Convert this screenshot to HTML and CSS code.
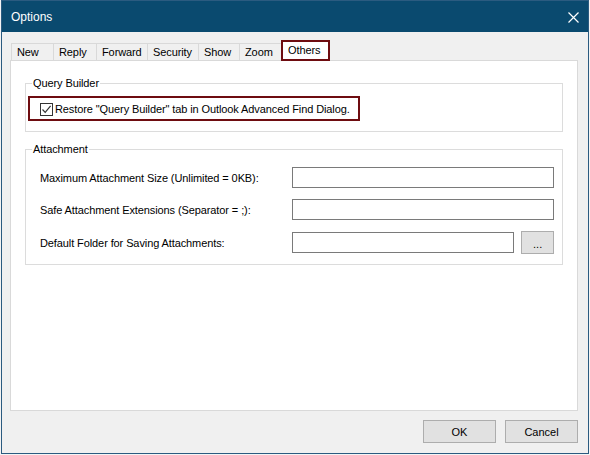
FILE: index.html
```html
<!DOCTYPE html>
<html lang="en">
<head>
<meta charset="utf-8">
<title>Options</title>
<link rel="stylesheet" href="styles.css">
</head>
<body>
<div class="window">
  <div class="titlebar">
    <span class="title">Options</span>
    <svg class="close" width="11" height="11" viewBox="0 0 11 11" aria-label="Close">
      <path d="M0.5 0.5 L10.5 10.5 M10.5 0.5 L0.5 10.5" stroke="#ffffff" stroke-width="1.2" fill="none"/>
    </svg>
  </div>
  <div class="content">
    <div class="tabs">
      <div class="tab w-new">New</div>
      <div class="tab w-reply">Reply</div>
      <div class="tab w-forward">Forward</div>
      <div class="tab w-security">Security</div>
      <div class="tab w-show">Show</div>
      <div class="tab w-zoom">Zoom</div>
      <div class="tab active">Others</div>
    </div>
    <div class="panel">
      <div class="group group-query">
        <div class="group-title">Query Builder</div>
        <label class="highlight">
          <span class="checkbox">
            <svg width="11" height="11" viewBox="0 0 11 11">
              <path d="M1.5 5.5 L4.2 8.3 L9.6 1.8" stroke="#333333" stroke-width="1.2" fill="none"/>
            </svg>
          </span>
          <span class="check-label">Restore "Query Builder" tab in Outlook Advanced Find Dialog.</span>
        </label>
      </div>
      <div class="group group-attach">
        <div class="group-title">Attachment</div>
        <div class="form">
          <span class="label">Maximum Attachment Size (Unlimited = 0KB):</span>
          <input class="field" type="text">
          <span class="label">Safe Attachment Extensions (Separator = ;):</span>
          <input class="field" type="text">
          <span class="label">Default Folder for Saving Attachments:</span>
          <div class="folder-row">
            <input class="field folder" type="text">
            <button class="btn browse" type="button">...</button>
          </div>
        </div>
      </div>
    </div>
    <div class="actions">
      <button class="btn action" type="button">OK</button>
      <button class="btn action" type="button">Cancel</button>
    </div>
  </div>
</div>
</body>
</html>
```

FILE: styles.css
```css
* {
  box-sizing: border-box;
}

html, body {
  margin: 0;
  padding: 0;
  background: #f4f4f4;
}

body {
  font-family: "Liberation Sans", Arial, sans-serif;
  font-size: 11px;
  letter-spacing: -0.1px;
  color: #000;
  width: 590px;
  height: 455px;
  overflow: hidden;
}

.window {
  margin-left: 1px;
  width: 588px;
  height: 454px;
  border: 1px solid #2b5b80;
  background: #f0f0f0;
  display: flex;
  flex-direction: column;
}

.titlebar {
  height: 31px;
  background: #0a4a6f;
  display: flex;
  align-items: center;
  justify-content: space-between;
  padding: 0 9px 0 9px;
  flex: none;
}

.title {
  color: #ffffff;
  font-size: 12px;
  letter-spacing: 0;
  line-height: 16px;
  margin-top: 1px;
}

.close {
  display: block;
  margin-top: 1px;
}

.content {
  flex: 1;
  display: flex;
  flex-direction: column;
  padding: 8px 10px 10px 8px;
}

/* tab strip */
.tabs {
  display: flex;
  align-items: flex-end;
  padding-left: 1px;
  height: 20px;
  flex: none;
}

.tab {
  height: 17px;
  line-height: 16px;
  border: 1px solid #d9d9d9;
  border-right: none;
  border-bottom: none;
  background: #f0f0f0;
  padding-left: 5px;
  white-space: nowrap;
}

.w-new { width: 42px; }
.w-reply { width: 43px; }
.w-forward { width: 51px; }
.w-security { width: 51px; }
.w-show { width: 41px; }
.w-zoom { width: 42px; }

.tab.active {
  position: relative;
  width: 49px;
  height: 21px;
  margin-bottom: -1px;
  border: 2px solid #6e0c10;
  background: #ffffff;
  line-height: 15px;
  padding-left: 5px;
  padding-top: 1px;
}

/* page body */
.panel {
  width: 568px;
  height: 351px;
  background: #ffffff;
  border: 1px solid #d9d9d9;
  padding: 22px 14px 0 14px;
  flex: none;
}

.group {
  border: 1px solid #dcdcdc;
}

.group-title {
  width: fit-content;
  margin: -9px 0 0 6px;
  padding: 0 1px;
  background: #ffffff;
  line-height: 16px;
}

.group-query {
  padding: 0 0 10px 2px;
}

.group-query .group-title {
  margin-left: 4px;
}

.highlight {
  display: flex;
  align-items: center;
  width: 332px;
  height: 25px;
  margin-top: 5px;
  border: 2px solid #6e0c10;
  padding: 0 0 0 10px;
}

.checkbox {
  width: 13px;
  height: 13px;
  border: 1px solid #333333;
  background: #ffffff;
  display: flex;
  align-items: center;
  justify-content: center;
  flex: none;
  margin-top: 1px;
}

.checkbox svg {
  display: block;
}

.check-label {
  margin-left: 2px;
  white-space: nowrap;
}

.group-attach {
  margin-top: 17px;
  padding: 0 8px 10px 0;
}

.form {
  margin-top: 10px;
  padding-left: 14px;
  display: grid;
  grid-template-columns: 1fr 262px;
  row-gap: 11px;
  align-items: center;
}

.label {
  white-space: nowrap;
}

.field {
  display: block;
  width: 262px;
  height: 21px;
  border: 1px solid #7a7a7a;
  background: #ffffff;
  margin: 0;
  padding: 0 3px;
  font: inherit;
  outline: none;
}

.folder-row {
  display: flex;
  align-items: center;
  gap: 7px;
}

.field.folder {
  width: 224px;
}

.btn {
  margin: 0;
  background: #e1e1e1;
  border: 1px solid #adadad;
  font: inherit;
  color: #000;
  padding: 0;
  height: 23px;
}

.browse {
  width: 33px;
  font-size: 11px;
  line-height: 12px;
  padding-top: 3px;
}

.actions {
  margin-top: 9px;
  display: flex;
  justify-content: flex-end;
  gap: 9px;
}

.action {
  width: 73px;
}
```
